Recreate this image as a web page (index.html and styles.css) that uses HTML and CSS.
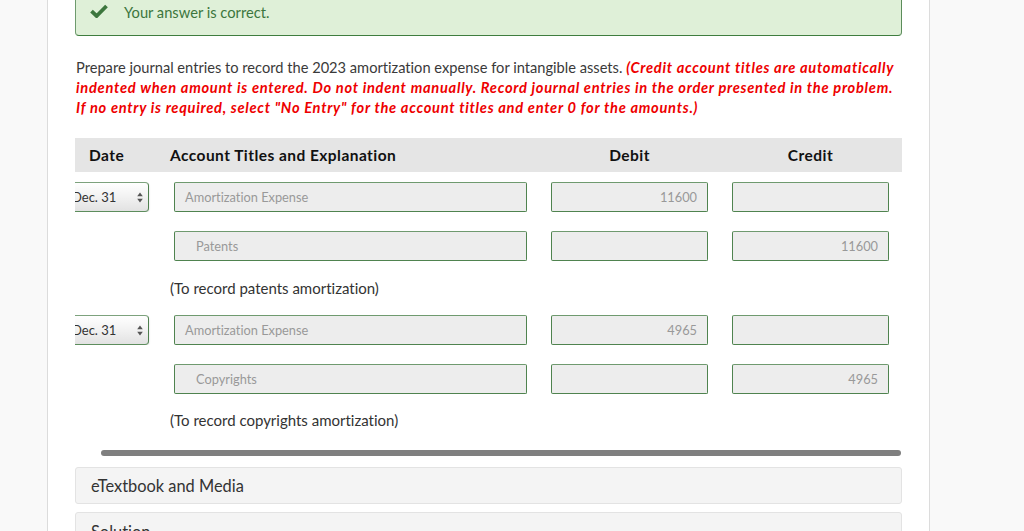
FILE: index.html
```html
<!DOCTYPE html>
<html lang="en">
<head>
<meta charset="utf-8">
<title>Journal entries</title>
<link rel="stylesheet" href="styles.css">
</head>
<body>
<div class="page">
  <aside class="gutter gutter-left"></aside>
  <main class="content">
    <div class="alert">
      <svg class="check" width="18" height="14" viewBox="0 0 18 14" aria-hidden="true"><path d="M1.5 7.2 L6.6 12 L16.5 2" fill="none" stroke="#3c763d" stroke-width="3.8"/></svg>
      <span>Your answer is correct.</span>
    </div>
    <p class="instructions">Prepare journal entries to record the 2023 amortization expense for intangible assets. <strong class="note">(Credit account titles are automatically indented when amount is entered. Do not indent manually. Record journal entries in the order presented in the problem. If no entry is required, select "No Entry" for the account titles and enter 0 for the amounts.)</strong></p>

    <div class="journal">
      <div class="jrow jhead">
        <div class="c-date">Date</div>
        <div class="c-acct">Account Titles and Explanation</div>
        <div class="c-num">Debit</div>
        <div class="c-num">Credit</div>
      </div>

      <div class="jrow entry first">
        <div class="c-date"><div class="select"><span>Dec. 31</span><svg class="arrows" width="6" height="11" viewBox="0 0 6 11" aria-hidden="true"><path d="M3 0.5 L5.8 4.3 L0.2 4.3 Z M3 10.5 L5.8 6.7 L0.2 6.7 Z" fill="#555"/></svg></div></div>
        <div class="c-acct"><div class="field">Amortization Expense</div></div>
        <div class="c-num"><div class="field num">11600</div></div>
        <div class="c-num"><div class="field num"></div></div>
      </div>
      <div class="jrow entry">
        <div class="c-date"></div>
        <div class="c-acct"><div class="field indent">Patents</div></div>
        <div class="c-num"><div class="field num"></div></div>
        <div class="c-num"><div class="field num">11600</div></div>
      </div>
      <div class="jrow explain">
        <div class="c-date"></div>
        <div class="c-acct">(To record patents amortization)</div>
      </div>

      <div class="jrow entry gap">
        <div class="c-date"><div class="select"><span>Dec. 31</span><svg class="arrows" width="6" height="11" viewBox="0 0 6 11" aria-hidden="true"><path d="M3 0.5 L5.8 4.3 L0.2 4.3 Z M3 10.5 L5.8 6.7 L0.2 6.7 Z" fill="#555"/></svg></div></div>
        <div class="c-acct"><div class="field">Amortization Expense</div></div>
        <div class="c-num"><div class="field num">4965</div></div>
        <div class="c-num"><div class="field num"></div></div>
      </div>
      <div class="jrow entry">
        <div class="c-date"></div>
        <div class="c-acct"><div class="field indent">Copyrights</div></div>
        <div class="c-num"><div class="field num"></div></div>
        <div class="c-num"><div class="field num">4965</div></div>
      </div>
      <div class="jrow explain last">
        <div class="c-date"></div>
        <div class="c-acct">(To record copyrights amortization)</div>
      </div>
    </div>

    <div class="scrolltrack"><div class="scrollthumb"></div></div>

    <div class="panel">eTextbook and Media</div>
    <div class="panel">Solution</div>
  </main>
  <aside class="gutter gutter-right"></aside>
</div>
</body>
</html>
```

FILE: styles.css
```css
* { box-sizing: border-box; }
html, body { margin: 0; padding: 0; }
body {
  font-family: Lato, "Open Sans", "Liberation Sans", sans-serif;
  font-variant-ligatures: none;
  color: #333;
  background: #fff;
  overflow: hidden;
}
.page {
  display: flex;
  height: 531px;
  overflow: hidden;
}
.gutter {
  background: #f9f9f9;
  flex: none;
}
.gutter-left { width: 48px; border-right: 1px solid #dcdcdc; }
.gutter-right { width: 95px; border-left: 1px solid #dcdcdc; }
.content {
  flex: 1;
  padding: 0 27px;
  min-width: 0;
}

/* alert */
.alert {
  margin-top: -11px;
  height: 47px;
  background: #dff0d8;
  border: 1px solid #c8dcc0;
  border-bottom: 1.5px solid #3f7d3f;
  border-right: 1px solid #5b8c5b;
  border-left: 1px solid #6e9b6e;
  border-radius: 4px;
  padding: 12px 0 0 14px;
  display: flex;
  align-items: flex-start;
  color: #3c763d;
  font-size: 14.7px;
  line-height: 20px;
}
.check { margin-top: 2px; margin-right: 16px; flex: none; }

/* instructions */
.instructions {
  margin: 22px 0 0 1px;
  font-size: 14.65px;
  line-height: 20px;
  color: #3a3a3a;
}
.note {
  color: #ee0000;
  font-style: italic;
  font-weight: 700;
  letter-spacing: 0.72px;
}

/* journal */
.journal { margin-top: 20px; overflow: hidden; }
.jrow {
  display: grid;
  grid-template-columns: 95px 381px 181px 181px;
  align-items: center;
}
.jhead {
  height: 34px;
  background: #e5e5e5;
  font-weight: 700;
  font-size: 15.5px;
  letter-spacing: 0.45px;
  color: #111;
}
.jhead .c-date { padding-left: 14px; }
.jhead .c-num { width: 157px; text-align: center; }

.entry { height: 30px; margin-top: 19px; }
.entry.first { margin-top: 10px; }
.entry.gap { margin-top: 17px; }
.explain {
  height: 20px;
  margin-top: 17px;
  font-size: 15px;
  line-height: 20px;
  color: #333;
}
.explain.last { margin-top: 16px; }

.c-date { overflow: hidden; height: 100%; display: flex; align-items: center; }
.select {
  margin-left: -11px;
  width: 85px;
  height: 30px;
  padding-left: 7px;
  display: flex;
  align-items: center;
  justify-content: space-between;
  font-size: 13px;
  color: #333;
  background: linear-gradient(#ffffff, #f3f3f3 45%, #e2e2e2);
  border: 1px solid #c9c9c9;
  border-right: 1px solid #4f7f4f;
  border-top-color: #7da27d;
  border-bottom-color: #5d8d5d;
  border-radius: 4px;
  box-shadow: 0 1px 2px rgba(0,0,0,0.15);
}
.arrows {
  flex: none;
  margin-right: 5px;
}
.field {
  height: 30px;
  background: #ededed;
  border: 1px solid #4f834f;
  border-top-color: #6f9a6f;
  border-radius: 2px;
  font-size: 12.8px;
  color: #999;
  line-height: 28px;
  padding: 0 10px;
  white-space: nowrap;
}
.c-acct .field { margin-left: 4px; width: 353px; }
.field.indent { padding-left: 21px; }
.c-num .field { width: 157px; }
.field.num { text-align: right; }

/* scrollbar */
.scrolltrack { margin-top: 20px; padding-left: 26px; padding-right: 1px; }
.scrollthumb {
  height: 6px;
  border-radius: 3px;
  background: #7f7f7f;
}

/* panels */
.panel {
  margin-top: 11px;
  height: 37px;
  background: #f4f4f4;
  border: 1px solid #e3e3e3;
  border-radius: 3px;
  padding-left: 15px;
  font-size: 16.4px;
  line-height: 35px;
  color: #333;
}
.panel + .panel { margin-top: 8px; line-height: 38px; }
```
